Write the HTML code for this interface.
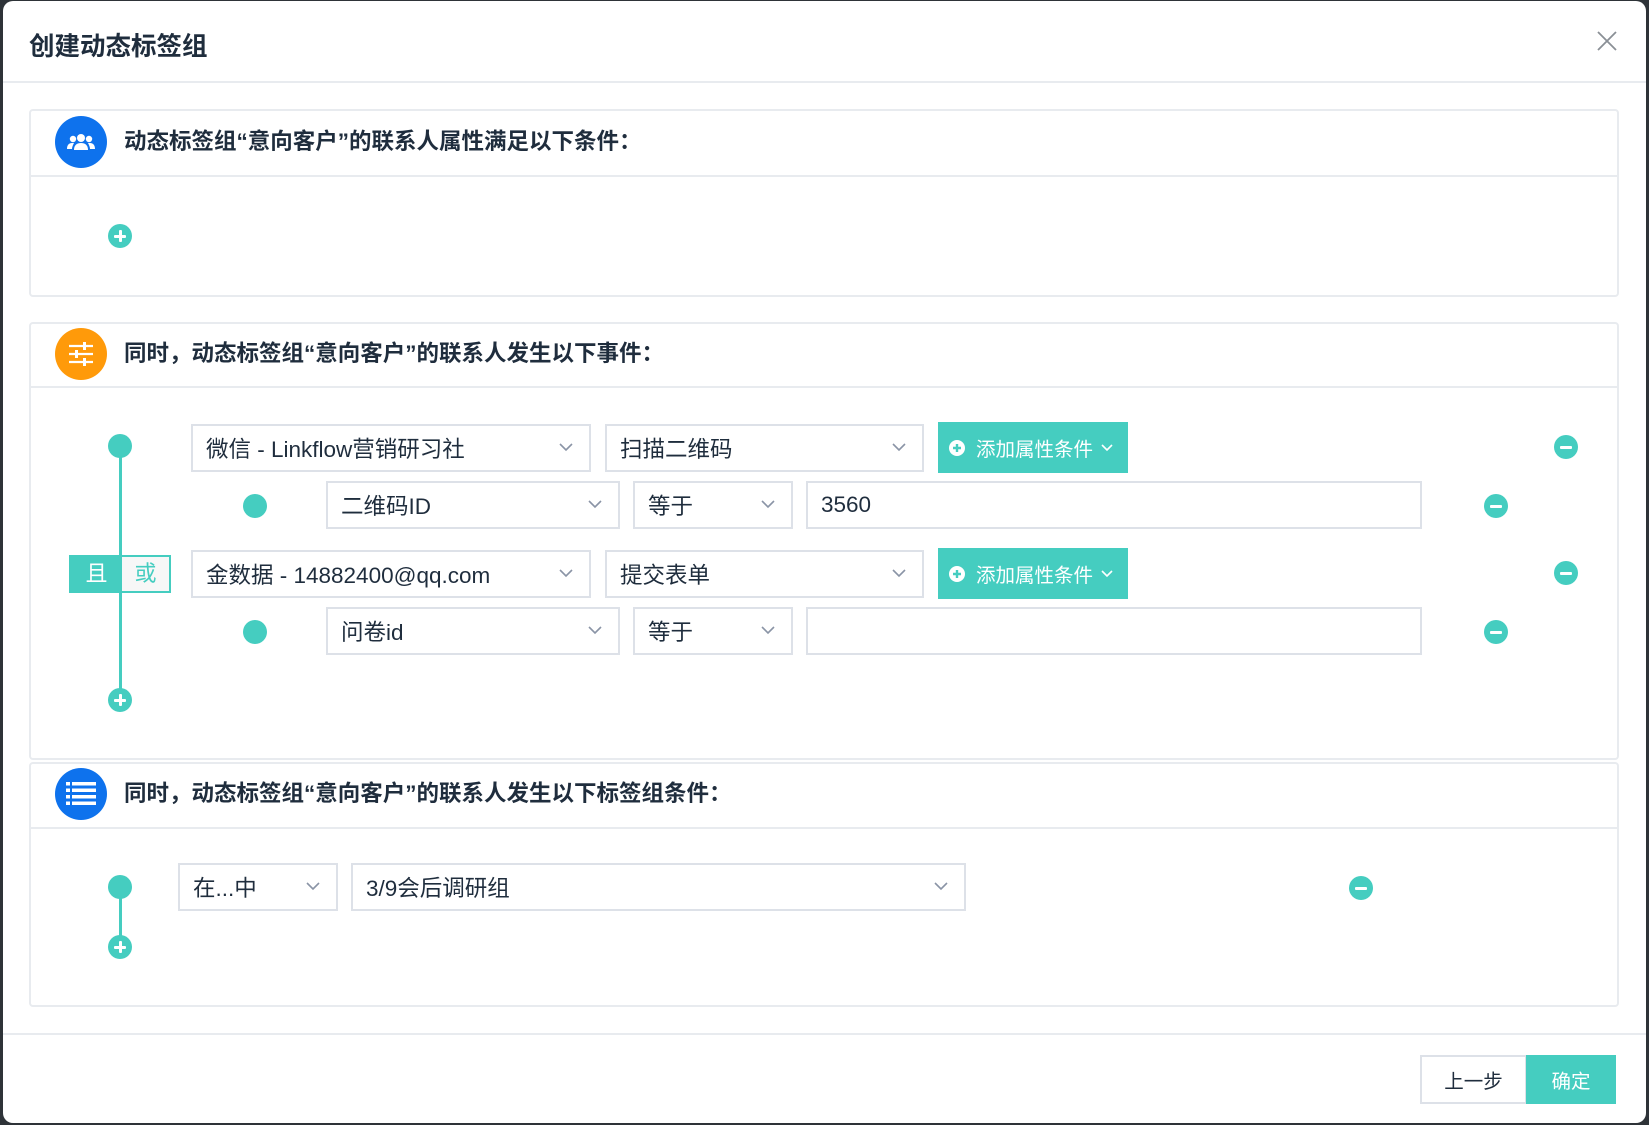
<!DOCTYPE html>
<html><head><meta charset="utf-8">
<style>
*{box-sizing:border-box;margin:0;padding:0}
body{width:1649px;height:1125px;background:#2e3338;position:relative;overflow:hidden;font-family:"Liberation Sans","Noto Sans CJK SC",sans-serif;color:#1f2d3d}
.modal{position:absolute;left:3px;top:1px;width:1643px;height:1122px;background:#fff;border-radius:10px}
.a{position:absolute}
.title{left:29px;top:26px;font-size:25.5px;font-weight:bold;color:#1f2d3d}
.hr{position:absolute;height:2px;background:#e8ebef}
.box{position:absolute;left:29px;width:1590px;border:2px solid #e8ebef;border-radius:4px;background:#fff}
.ic{position:absolute;width:52px;height:52px;border-radius:50%;display:flex;align-items:center;justify-content:center}
.ht{position:absolute;left:124px;font-size:22.5px;font-weight:bold;color:#1f2d3d;line-height:26px}
.plus,.minus,.dot{position:absolute;width:24px;height:24px;border-radius:50%;background:#45cdc0}
.plus::before,.plus::after,.minus::before{content:"";position:absolute;background:#fff;left:6px;top:11px;width:12px;height:2.5px;border-radius:1px}
.plus::after{left:11px;top:6px;width:2.5px;height:12px}
.sel{position:absolute;border:2px solid #dde1e8;background:#fff;font-size:22.5px;padding-left:13px;display:flex;align-items:center;color:#1f2d3d}
.sel svg{position:absolute;right:16px;top:50%;margin-top:-5px}
.btn{position:absolute;background:#45cdc0;color:#fff;font-size:19.5px;display:flex;align-items:center;padding-left:11px}
.line{position:absolute;left:119px;width:3px;background:#45cdc0}
</style></head><body>
<div class="modal"></div>
<div class="a title">创建动态标签组</div>
<svg class="a" style="left:1597px;top:31px" width="20" height="20" viewBox="0 0 20 20"><path d="M1 1L19 19M19 1L1 19" stroke="#8a8f96" stroke-width="1.8"/></svg>
<div class="hr" style="left:3px;width:1643px;top:81px"></div>

<div class="box" style="top:109px;height:188px"></div>
<div class="hr" style="left:31px;width:1586px;top:175px"></div>
<div class="ic" style="left:55px;top:116px;background:#0e72ed">
<svg width="28" height="18" viewBox="0 0 28 18"><g fill="#fff"><circle cx="14" cy="5" r="4"/><path d="M7 17c0-5 3-7 7-7s7 2 7 7z"/><circle cx="6" cy="6" r="3.2"/><path d="M0 16c0-4 2-6 5-6h2c-1 2-2 4-2 6z"/><circle cx="22" cy="6" r="3.2"/><path d="M28 16c0-4-2-6-5-6h-2c1 2 2 4 2 6z"/></g></svg></div>
<div class="ht" style="top:129px">动态标签组“意向客户”的联系人属性满足以下条件：</div>
<div class="plus" style="left:108px;top:224px"></div>

<div class="box" style="top:322px;height:438px"></div>
<div class="hr" style="left:31px;width:1586px;top:386px"></div>
<div class="ic" style="left:55px;top:328px;background:#ff9a0a">
<svg width="28" height="24" viewBox="0 0 28 24"><g stroke="#fff" stroke-width="2.2" fill="none"><path d="M2 4h24M2 12h24M2 20h24"/></g><g fill="#fff"><rect x="16" y="0" width="3" height="8"/><rect x="8" y="8" width="3" height="8"/><rect x="16" y="16" width="3" height="8"/></g></svg></div>
<div class="ht" style="top:341px">同时，动态标签组“意向客户”的联系人发生以下事件：</div>

<div class="line" style="top:446px;height:254px"></div>
<div class="dot" style="left:108px;top:434px"></div>
<div class="plus" style="left:108px;top:688px"></div>

<div class="sel" style="left:191px;top:424px;width:400px;height:48px">微信 - Linkflow营销研习社<svg width="14" height="9" viewBox="0 0 14 9"><path d="M1 1l6 6 6-6" stroke="#8a94a6" stroke-width="1.6" fill="none"/></svg></div>
<div class="sel" style="left:605px;top:424px;width:319px;height:48px">扫描二维码<svg width="14" height="9" viewBox="0 0 14 9"><path d="M1 1l6 6 6-6" stroke="#8a94a6" stroke-width="1.6" fill="none"/></svg></div>
<div class="btn" style="left:938px;top:422px;width:190px;height:51px"><svg width="16" height="16" viewBox="0 0 16 16" style="margin-right:11px"><circle cx="8" cy="8" r="8" fill="#fff"/><path d="M4 8h8M8 4v8" stroke="#45cdc0" stroke-width="2.4"/></svg>添加属性条件<svg width="12" height="8" viewBox="0 0 12 8" style="margin-left:8px"><path d="M1 1l5 5 5-5" stroke="#fff" stroke-width="1.6" fill="none"/></svg></div>
<div class="minus" style="left:1554px;top:435px"></div>

<div class="dot" style="left:243px;top:494px"></div>
<div class="sel" style="left:326px;top:481px;width:294px;height:48px">二维码ID<svg width="14" height="9" viewBox="0 0 14 9"><path d="M1 1l6 6 6-6" stroke="#8a94a6" stroke-width="1.6" fill="none"/></svg></div>
<div class="sel" style="left:633px;top:481px;width:160px;height:48px">等于<svg width="14" height="9" viewBox="0 0 14 9"><path d="M1 1l6 6 6-6" stroke="#8a94a6" stroke-width="1.6" fill="none"/></svg></div>
<div class="sel" style="left:806px;top:481px;width:616px;height:48px">3560</div>
<div class="minus" style="left:1484px;top:494px"></div>

<div class="a" style="left:69px;top:555px;width:102px;height:38px;border:2px solid #45cdc0;background:#f7f7f7;display:flex">
<div style="width:51px;background:#45cdc0;color:#fff;font-size:22px;text-align:center;line-height:34px">且</div>
<div style="flex:1;color:#45cdc0;font-size:22px;text-align:center;line-height:34px">或</div></div>
<div class="sel" style="left:191px;top:550px;width:400px;height:48px">金数据 - 14882400@qq.com<svg width="14" height="9" viewBox="0 0 14 9"><path d="M1 1l6 6 6-6" stroke="#8a94a6" stroke-width="1.6" fill="none"/></svg></div>
<div class="sel" style="left:605px;top:550px;width:319px;height:48px">提交表单<svg width="14" height="9" viewBox="0 0 14 9"><path d="M1 1l6 6 6-6" stroke="#8a94a6" stroke-width="1.6" fill="none"/></svg></div>
<div class="btn" style="left:938px;top:548px;width:190px;height:51px"><svg width="16" height="16" viewBox="0 0 16 16" style="margin-right:11px"><circle cx="8" cy="8" r="8" fill="#fff"/><path d="M4 8h8M8 4v8" stroke="#45cdc0" stroke-width="2.4"/></svg>添加属性条件<svg width="12" height="8" viewBox="0 0 12 8" style="margin-left:8px"><path d="M1 1l5 5 5-5" stroke="#fff" stroke-width="1.6" fill="none"/></svg></div>
<div class="minus" style="left:1554px;top:561px"></div>

<div class="dot" style="left:243px;top:620px"></div>
<div class="sel" style="left:326px;top:607px;width:294px;height:48px">问卷id<svg width="14" height="9" viewBox="0 0 14 9"><path d="M1 1l6 6 6-6" stroke="#8a94a6" stroke-width="1.6" fill="none"/></svg></div>
<div class="sel" style="left:633px;top:607px;width:160px;height:48px">等于<svg width="14" height="9" viewBox="0 0 14 9"><path d="M1 1l6 6 6-6" stroke="#8a94a6" stroke-width="1.6" fill="none"/></svg></div>
<div class="sel" style="left:806px;top:607px;width:616px;height:48px"></div>
<div class="minus" style="left:1484px;top:620px"></div>

<div class="box" style="top:762px;height:245px"></div>
<div class="hr" style="left:31px;width:1586px;top:827px"></div>
<div class="ic" style="left:55px;top:768px;background:#0e72ed">
<svg width="30" height="26" viewBox="0 0 30 26"><g fill="#fff"><rect x="0" y="1" width="4" height="3.5"/><rect x="0" y="7.5" width="4" height="3.5"/><rect x="0" y="14" width="4" height="3.5"/><rect x="0" y="20.5" width="4" height="3.5"/><rect x="6" y="1" width="24" height="3.5"/><rect x="6" y="7.5" width="24" height="3.5"/><rect x="6" y="14" width="24" height="3.5"/><rect x="6" y="20.5" width="24" height="3.5"/></g></svg></div>
<div class="ht" style="top:781px">同时，动态标签组“意向客户”的联系人发生以下标签组条件：</div>

<div class="line" style="top:887px;height:60px"></div>
<div class="dot" style="left:108px;top:875px"></div>
<div class="plus" style="left:108px;top:935px"></div>
<div class="sel" style="left:178px;top:863px;width:160px;height:48px">在...中<svg width="14" height="9" viewBox="0 0 14 9"><path d="M1 1l6 6 6-6" stroke="#8a94a6" stroke-width="1.6" fill="none"/></svg></div>
<div class="sel" style="left:351px;top:863px;width:615px;height:48px">3/9会后调研组<svg width="14" height="9" viewBox="0 0 14 9"><path d="M1 1l6 6 6-6" stroke="#8a94a6" stroke-width="1.6" fill="none"/></svg></div>
<div class="minus" style="left:1349px;top:876px"></div>

<div class="hr" style="left:3px;width:1643px;top:1033px"></div>
<div class="a" style="left:1420px;top:1055px;width:107px;height:49px;border:2px solid #dde1e8;font-size:19.5px;display:flex;align-items:center;justify-content:center;color:#1f2d3d">上一步</div>
<div class="a" style="left:1526px;top:1055px;width:90px;height:49px;background:#45cdc0;font-size:19.5px;display:flex;align-items:center;justify-content:center;color:#fff">确定</div>
</body></html>
